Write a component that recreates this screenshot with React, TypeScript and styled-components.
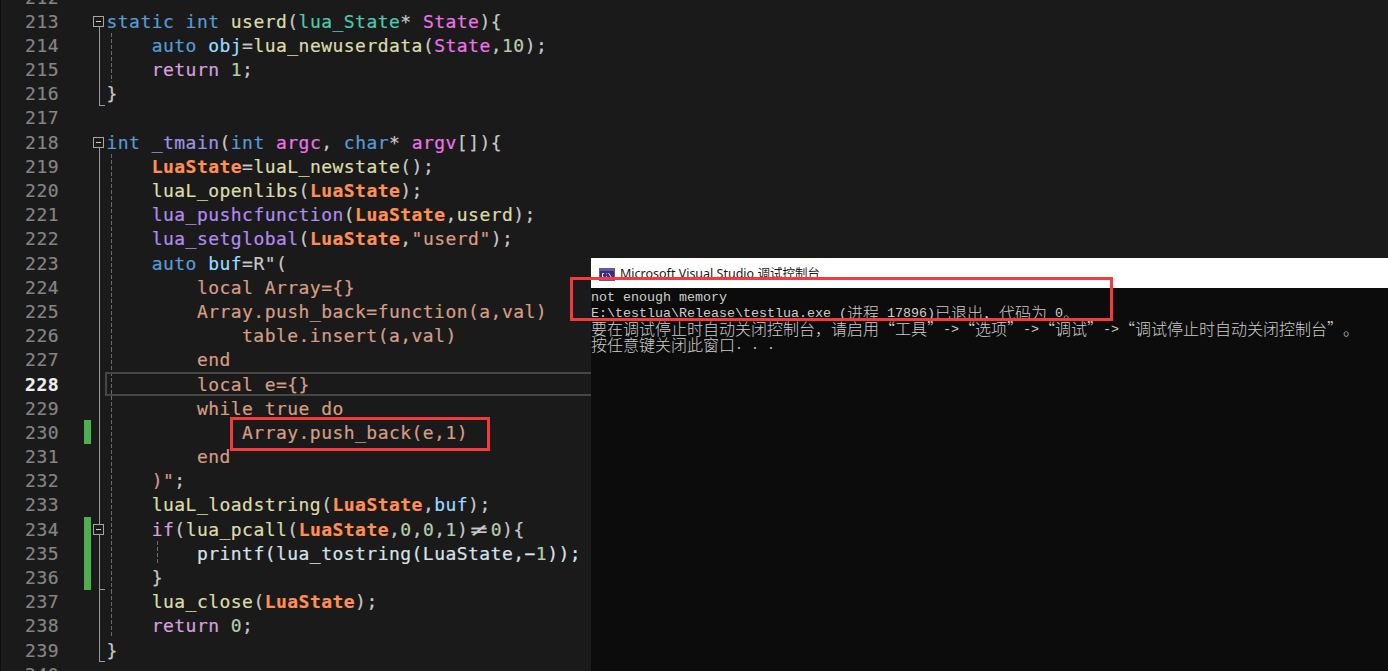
import React from "react";
import styled, { createGlobalStyle } from "styled-components";

const Global = createGlobalStyle`
  html, body { margin: 0; padding: 0; height: 671px; overflow: hidden; background: #1a1a1a; }
`;

const palette: Record<string, string> = {
  p: "#c8c8c8",
  kw: "#569cd6",
  ct: "#d8a0df",
  fn: "#dcdcaa",
  mc: "#b08cf0",
  tm: "#9c95e6",
  ty: "#4ec9b0",
  pa: "#ee72ea",
  lo: "#9cdcfe",
  me: "#ff8f55",
  nu: "#b5cea8",
  st: "#d69d85",
  wh: "#d8e2ea",
};

type Tok = [string, string];
type Fold = "none" | "start" | "nested" | "line" | "end" | "tick";
interface Line {
  n: number;
  toks: Tok[];
  fold: Fold;
  guides?: number[];
  change?: boolean;
  current?: boolean;
}

const g1 = [6];

const lines: Line[] = [
  { n: 212, toks: [], fold: "none" },
  { n: 213, fold: "start", toks: [["kw", "static int "], ["fn", "userd"], ["p", "("], ["ty", "lua_State"], ["p", "* "], ["pa", "State"], ["p", "){"]] },
  { n: 214, fold: "line", guides: g1, toks: [["p", "    "], ["kw", "auto "], ["lo", "obj"], ["p", "="], ["fn", "lua_newuserdata"], ["p", "("], ["pa", "State"], ["p", ","], ["nu", "10"], ["p", ");"]] },
  { n: 215, fold: "line", guides: g1, toks: [["p", "    "], ["ct", "return "], ["nu", "1"], ["p", ";"]] },
  { n: 216, fold: "end", toks: [["p", "}"]] },
  { n: 217, fold: "none", toks: [] },
  { n: 218, fold: "start", toks: [["kw", "int "], ["tm", "_tmain"], ["p", "("], ["kw", "int "], ["pa", "argc"], ["p", ", "], ["kw", "char"], ["p", "* "], ["pa", "argv"], ["p", "[]){"]] },
  { n: 219, fold: "line", guides: g1, toks: [["p", "    "], ["me", "LuaState"], ["p", "="], ["fn", "luaL_newstate"], ["p", "();"]] },
  { n: 220, fold: "line", guides: g1, toks: [["p", "    "], ["fn", "luaL_openlibs"], ["p", "("], ["me", "LuaState"], ["p", ");"]] },
  { n: 221, fold: "line", guides: g1, toks: [["p", "    "], ["mc", "lua_pushcfunction"], ["p", "("], ["me", "LuaState"], ["p", ","], ["fn", "userd"], ["p", ");"]] },
  { n: 222, fold: "line", guides: g1, toks: [["p", "    "], ["mc", "lua_setglobal"], ["p", "("], ["me", "LuaState"], ["p", ","], ["st", "\"userd\""], ["p", ");"]] },
  { n: 223, fold: "line", guides: g1, toks: [["p", "    "], ["kw", "auto "], ["lo", "buf"], ["p", "=R\"("]] },
  { n: 224, fold: "line", guides: g1, toks: [["st", "        local Array={}"]] },
  { n: 225, fold: "line", guides: g1, toks: [["st", "        Array.push_back=function(a,val)"]] },
  { n: 226, fold: "line", guides: g1, toks: [["st", "            table.insert(a,val)"]] },
  { n: 227, fold: "line", guides: g1, toks: [["st", "        end"]] },
  { n: 228, fold: "line", guides: g1, current: true, toks: [["st", "        local e={}"]] },
  { n: 229, fold: "line", guides: g1, toks: [["st", "        while true do"]] },
  { n: 230, fold: "line", guides: g1, change: true, toks: [["st", "            Array.push_back(e,1)"]] },
  { n: 231, fold: "line", guides: g1, toks: [["st", "        end"]] },
  { n: 232, fold: "line", guides: g1, toks: [["p", "    "], ["st", ")\""], ["p", ";"]] },
  { n: 233, fold: "line", guides: g1, toks: [["p", "    "], ["fn", "luaL_loadstring"], ["p", "("], ["me", "LuaState"], ["p", ","], ["lo", "buf"], ["p", ");"]] },
  { n: 234, fold: "nested", guides: g1, change: true, toks: [["p", "    "], ["ct", "if"], ["p", "("], ["fn", "lua_pcall"], ["p", "("], ["me", "LuaState"], ["p", ","], ["nu", "0"], ["p", ","], ["nu", "0"], ["p", ","], ["nu", "1"], ["p", ")"], ["ne", "≠"], ["nu", "0"], ["p", "){"]] },
  { n: 235, fold: "line", guides: [6, 52], change: true, toks: [["p", "    "], ["wh", "    printf(lua_tostring(LuaState,−"], ["nu", "1"], ["wh", "));"]] },
  { n: 236, fold: "tick", guides: g1, change: true, toks: [["p", "    }"]] },
  { n: 237, fold: "line", guides: g1, toks: [["p", "    "], ["fn", "lua_close"], ["p", "("], ["me", "LuaState"], ["p", ");"]] },
  { n: 238, fold: "line", guides: g1, toks: [["p", "    "], ["ct", "return "], ["nu", "0"], ["p", ";"]] },
  { n: 239, fold: "end", toks: [["p", "}"]] },
  { n: 240, fold: "none", toks: [] },
];

const Editor = styled.div`
  height: 671px;
  overflow: hidden;
  background: #1a1a1a;
  border-left: 1px solid #0e0e0e;
  font-family: "DejaVu Sans Mono", "Liberation Mono", monospace;
  font-size: 18px;
  letter-spacing: 0.46px;
  font-variant-ligatures: none;
  -webkit-text-stroke: 0.2px;
`;

const Rows = styled.div`
  margin-top: -15.2px;
`;

const Row = styled.div`
  display: flex;
  height: 24.2px;
  line-height: 24.2px;
`;

const LineNo = styled.div<{ $current?: boolean }>`
  width: 58px;
  padding-top: 0.7px;
  text-align: right;
  flex: none;
  color: ${(p) => (p.$current ? "#f0f0f0" : "#858585")};
  font-weight: ${(p) => (p.$current ? 700 : 400)};
`;

const Change = styled.div<{ $on?: boolean }>`
  width: 7px;
  flex: none;
  margin: 0 2px 0 25px;
  background: ${(p) => (p.$on ? "#4caf50" : "transparent")};
`;

const boxed = `
  &::after {
    content: "";
    position: absolute;
    left: 0;
    top: 7px;
    width: 9px;
    height: 9px;
    border: 1px solid #a6a6a6;
    background:
      linear-gradient(#d0d0d0, #d0d0d0) center / 5px 1px no-repeat,
      #1a1a1a;
  }
`;

const foldCss: Record<Fold, string> = {
  none: "",
  line: `&::before { content: ""; position: absolute; left: 6px; top: 0; bottom: 0; width: 1px; background: #9a9a9a; }`,
  start: `&::before { content: ""; position: absolute; left: 6px; top: 16px; bottom: 0; width: 1px; background: #9a9a9a; } ${boxed}`,
  nested: `&::before { content: ""; position: absolute; left: 6px; top: 0; bottom: 0; width: 1px; background: #9a9a9a; } ${boxed}`,
  end: `&::before { content: ""; position: absolute; left: 6px; top: 0; bottom: 0; width: 5px; border-left: 1px solid #9a9a9a; border-bottom: 1px solid #9a9a9a; }`,
  tick: `&::before { content: ""; position: absolute; left: 6px; top: 0; bottom: 0; width: 5px; border-left: 1px solid #9a9a9a; border-bottom: 1px solid #9a9a9a; }`,
};

const FoldCell = styled.div<{ $fold: Fold }>`
  position: relative;
  width: 12px;
  flex: none;
  ${(p) => foldCss[p.$fold]}
`;

const Code = styled.div<{ $guides?: number[]; $current?: boolean }>`
  flex: 1;
  padding: 0.7px 0 0 1.5px;
  white-space: pre;
  background-image: ${(p) =>
    (p.$guides || []).map(() => "repeating-linear-gradient(to bottom, #6a6a6a 0 4px, transparent 4px 6px)").join(",") || "none"};
  background-size: 1px 100%;
  background-repeat: no-repeat;
  background-position: ${(p) => (p.$guides || []).map((x) => `${x}px 0`).join(",") || "0 0"};
  box-shadow: ${(p) => (p.$current ? "inset 0 0 0 2px #464646" : "none")};
`;

const Token = styled.span<{ $k: string }>`
  color: ${(p) => palette[p.$k] || "#c8c8c8"};
  font-weight: ${(p) => (p.$k === "me" ? 700 : 400)};
`;

const NotEqual = styled.span`
  display: inline-block;
  width: 22.6px;
  text-align: center;
  color: #c8c8c8;
  transform: scaleX(1.6);
`;

const Console = styled.div`
  position: absolute;
  left: 591px;
  right: 0;
  top: 258px;
  bottom: 0;
  background: #0c0c0c;
  display: flex;
  flex-direction: column;
`;

const TitleBar = styled.div`
  height: 30px;
  flex: none;
  background: #ffffff;
  display: flex;
  align-items: flex-start;
  gap: 5px;
  padding: 10px 0 0 8px;
  box-sizing: border-box;
`;

const TitleText = styled.span`
  margin-top: -1px;
  font-family: "Noto Sans", "Noto Sans CJK SC", sans-serif;
  font-size: 12.5px;
  line-height: 14px;
  color: #1a1a1a;
  white-space: pre;
`;

const Output = styled.div`
  padding-top: 1px;
  font-family: "Liberation Mono", monospace;
  font-size: 13.333px;
  line-height: 16px;
  color: #cccccc;
  white-space: pre;
`;

const OutputLine = styled.div`
  display: flex;
  align-items: flex-start;
  height: 16px;
`;

const Latin = styled.span`
  margin-top: 1px;
`;

const Han = styled.span`
  margin-top: -1px;
  font-family: "Noto Sans CJK SC", sans-serif;
  font-size: 16px;
  line-height: 16px;
  font-weight: 300;
`;

const Quote = styled(Han)<{ $open: boolean }>`
  width: 16px;
  text-align: ${(p) => (p.$open ? "right" : "left")};
`;

const RedBox = styled.div<{ $x: number; $y: number; $w: number; $h: number }>`
  position: absolute;
  left: ${(p) => p.$x}px;
  top: ${(p) => p.$y}px;
  width: ${(p) => p.$w}px;
  height: ${(p) => p.$h}px;
  box-sizing: border-box;
  border: 3px solid #f43a3c;
  pointer-events: none;
`;

const IconSvg = styled.svg`
  flex: none;
  display: block;
`;

const ConsoleText = ({ text }: { text: string }) => {
  const parts = text.split(/([“”]|[\u3000-\u30ff\u4e00-\u9fff\uff00-\uffef]+)/);
  return (
    <OutputLine>
      {parts.map((s, i) => {
        if (!s) return null;
        if (s === "“" || s === "”") return <Quote key={i} $open={s === "“"}>{s}</Quote>;
        return i % 2 ? <Han key={i}>{s}</Han> : <Latin key={i}>{s}</Latin>;
      })}
    </OutputLine>
  );
};

export default function App() {
  return (
    <>
      <Global />
      <Editor>
        <Rows>
          {lines.map((l) => (
            <Row key={l.n}>
              <LineNo $current={l.current}>{l.n}</LineNo>
              <Change $on={l.change} />
              <FoldCell $fold={l.fold} />
              <Code $guides={l.guides} $current={l.current}>
                {l.toks.map((t, i) =>
                  t[0] === "ne" ? (
                    <NotEqual key={i}>{t[1]}</NotEqual>
                  ) : (
                    <Token key={i} $k={t[0]}>
                      {t[1]}
                    </Token>
                  )
                )}
              </Code>
            </Row>
          ))}
        </Rows>
      </Editor>
      <Console>
        <TitleBar>
          <IconSvg width="16" height="13" viewBox="0 0 16 13">
            <rect x="0" y="0" width="16" height="13" fill="#68579c" />
            <rect x="1" y="3" width="14" height="9" fill="#3a2d78" />
            <path d="M5 5.5H3.5V9H5M7.5 5.5v.8M7.5 8v.8M9.5 5l3 4.5" stroke="#e8e4f4" strokeWidth="1" fill="none" />
          </IconSvg>
          <TitleText>Microsoft Visual Studio 调试控制台</TitleText>
        </TitleBar>
        <Output>
          <ConsoleText text="not enough memory" />
          <ConsoleText text="E:\testlua\Release\testlua.exe (进程 17896)已退出，代码为 0。" />
          <ConsoleText text="要在调试停止时自动关闭控制台，请启用“工具”->“选项”->“调试”->“调试停止时自动关闭控制台”。" />
          <ConsoleText text="按任意键关闭此窗口. . ." />
        </Output>
      </Console>
      <RedBox $x={570} $y={277} $w={543} $h={44} />
      <RedBox $x={230} $y={417} $w={260} $h={34} />
    </>
  );
}
